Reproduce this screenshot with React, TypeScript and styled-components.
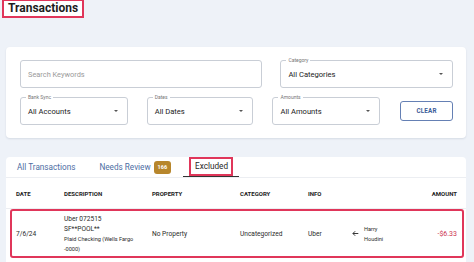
import React from 'react';
import styled, { createGlobalStyle } from 'styled-components';

const GlobalStyle = createGlobalStyle`
  html, body {
    margin: 0;
    padding: 0;
    background: #eef2f8;
    font-family: Roboto, "Noto Sans", sans-serif;
    color: #222;
  }
  * { box-sizing: border-box; }
`;

const Page = styled.div`
  width: 474px;
  height: 262px;
  overflow: hidden;
  padding: 0 8px 0 6px;
`;

const TitleBox = styled.h1`
  width: fit-content;
  margin: 0 0 0 -4px;
  height: 18px;
  padding: 0 4px 0 4px;
  border: 2px solid #e0365a;
  border-top-width: 1px;
  font-size: 12px;
  line-height: 15px;
  font-weight: 700;
  color: #1d1d1d;
  background: #fff;
`;

const FilterCard = styled.div`
  margin-top: 29px;
  width: 460px;
  height: 91px;
  background: #fff;
  border-radius: 4px;
  box-shadow: 0 1px 2px rgba(40, 60, 90, 0.12);
  padding: 13px 13px 0 14px;
  display: flex;
  flex-direction: column;
  gap: 9px;
`;

const Row = styled.div<{ gap: number }>`
  display: flex;
  align-items: center;
  gap: ${({ gap }) => gap}px;
`;

const Field = styled.div<{ w: number }>`
  position: relative;
  width: ${({ w }) => w}px;
  height: 28px;
  border: 1px solid #c9ced6;
  border-radius: 3px;
  display: flex;
  align-items: center;
  padding: 0 7px;
  font-size: 7.6px;
  color: #222;
`;

const Placeholder = styled.span`
  color: #9a9a9a;
  font-size: 7.4px;
`;

const FieldLabel = styled.span`
  position: absolute;
  top: -4px;
  left: 5px;
  padding: 0 2px;
  background: #fff;
  font-size: 5px;
  line-height: 7px;
  color: #777;
`;

const Value = styled.span`
  flex: 1;
`;

const Caret = styled.span`
  width: 0;
  height: 0;
  border-left: 2.5px solid transparent;
  border-right: 2.5px solid transparent;
  border-top: 2.5px solid #555;
  margin-right: 2px;
`;

const ClearButton = styled.button`
  width: 53px;
  height: 20px;
  margin-left: 1px;
  border: 1px solid #6580b4;
  border-radius: 3px;
  background: #fff;
  color: #3c5d99;
  font-family: inherit;
  font-size: 6.3px;
  font-weight: 700;
  letter-spacing: 0.2px;
  padding: 0;
`;

const TableCard = styled.div`
  margin-top: 19px;
  width: 460px;
  height: 120px;
  background: #fff;
  border-radius: 4px 4px 0 0;
`;

const Tabs = styled.div`
  display: flex;
  align-items: stretch;
  height: 21px;
  padding-left: 11px;
  border-bottom: 1px solid #eceef2;
`;

const Tab = styled.div<{ active?: boolean; mr: number }>`
  display: flex;
  align-items: center;
  gap: 3px;
  margin-right: ${({ mr }) => mr}px;
  font-size: 8.2px;
  color: ${({ active }) => (active ? '#1f1f1f' : '#4d6da3')};
  padding: ${({ active }) => (active ? '0 6px' : '0')};
  border-bottom: ${({ active }) => (active ? '1px solid #333' : 'none')};
`;

const ActiveLabel = styled.span`
  align-self: flex-start;
  border: 2px solid #e0365a;
  height: 19px;
  line-height: 15px;
  padding: 0 3px 0 4px;
`;

const Badge = styled.span`
  background: #b7862c;
  color: #fff;
  font-size: 5.5px;
  font-weight: 700;
  border-radius: 3px;
  padding: 0 4px;
  height: 13px;
  line-height: 13px;
`;

const Grid = styled.div`
  display: grid;
  grid-template-columns: 48px 88px 88px 68px 44px 12px 1fr 40px;
  align-items: center;
`;

const HeadRow = styled(Grid)`
  height: 31px;
  padding: 0 9px 0 10px;
  font-size: 6px;
  font-weight: 700;
  color: #222;
  border-bottom: 1px solid #eceef2;
`;

const Right = styled.span`
  text-align: right;
`;

const DataRow = styled(Grid)`
  margin: 0 2px 0 4px;
  height: 49px;
  padding: 0 5px 0 4px;
  border: 2px solid #e0365a;
  border-radius: 3px;
  font-size: 6.6px;
  color: #2a2a2a;
`;

const Desc = styled.div`
  display: flex;
  flex-direction: column;
  line-height: 10px;
`;

const Small = styled.span`
  font-size: 5.6px;
`;

const Amount = styled.span`
  text-align: right;
  color: #cc3350;
  font-size: 7px;
`;

const Arrow = () => (
  <svg width="7" height="7" viewBox="0 0 10 10">
    <path d="M9 5H1.5M4.5 1.8L1.3 5l3.2 3.2" stroke="#222" strokeWidth="1.3" fill="none" />
  </svg>
);

export default function App() {
  return (
    <Page>
      <GlobalStyle />
      <TitleBox>Transactions</TitleBox>
      <FilterCard>
        <Row gap={18}>
          <Field w={243}>
            <Placeholder>Search Keywords</Placeholder>
          </Field>
          <Field w={173}>
            <FieldLabel>Category</FieldLabel>
            <Value>All Categories</Value>
            <Caret />
          </Field>
        </Row>
        <Row gap={19}>
          <Field w={108}>
            <FieldLabel>Bank Sync</FieldLabel>
            <Value>All Accounts</Value>
            <Caret />
          </Field>
          <Field w={107}>
            <FieldLabel>Dates</FieldLabel>
            <Value>All Dates</Value>
            <Caret />
          </Field>
          <Field w={108}>
            <FieldLabel>Amounts</FieldLabel>
            <Value>All Amounts</Value>
            <Caret />
          </Field>
          <ClearButton>CLEAR</ClearButton>
        </Row>
      </FilterCard>
      <TableCard>
        <Tabs>
          <Tab mr={24}>All Transactions</Tab>
          <Tab mr={12}>
            Needs Review <Badge>166</Badge>
          </Tab>
          <Tab active mr={0}>
            <ActiveLabel>Excluded</ActiveLabel>
          </Tab>
        </Tabs>
        <HeadRow>
          <span>DATE</span>
          <span>DESCRIPTION</span>
          <span>PROPERTY</span>
          <span>CATEGORY</span>
          <span>INFO</span>
          <span />
          <span />
          <Right>AMOUNT</Right>
        </HeadRow>
        <DataRow>
          <span>7/6/24</span>
          <Desc>
            <span>Uber 072515</span>
            <span>SF**POOL**</span>
            <Small>Plaid Checking (Wells Fargo</Small>
            <Small>-0000)</Small>
          </Desc>
          <span>No Property</span>
          <span>Uncategorized</span>
          <span>Uber</span>
          <Arrow />
          <Desc>
            <Small>Harry</Small>
            <Small>Houdini</Small>
          </Desc>
          <Amount>-$6.33</Amount>
        </DataRow>
      </TableCard>
    </Page>
  );
}
